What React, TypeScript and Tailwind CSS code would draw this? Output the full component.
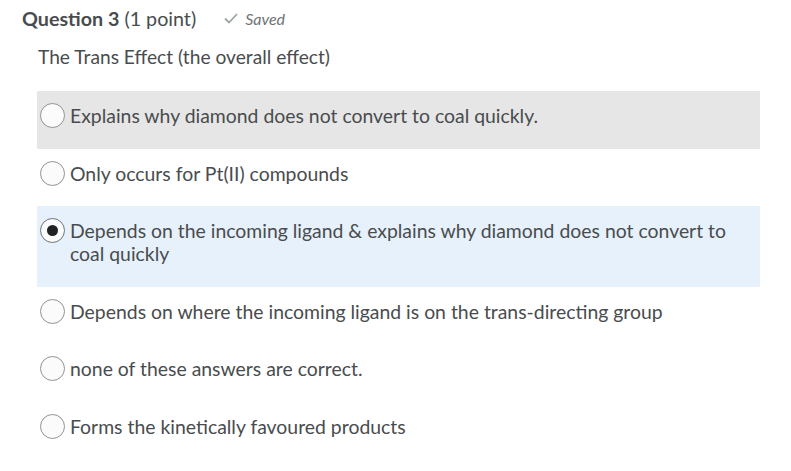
import React from 'react';

const OPTIONS = [
  { text: 'Explains why diamond does not convert to coal quickly.', bg: 'bg-[#e6e6e6]' },
  { text: 'Only occurs for Pt(II) compounds', bg: '' },
  { text: 'Depends on the incoming ligand & explains why diamond does not convert to coal quickly', bg: 'bg-[#e7f1fb]', checked: true },
  { text: 'Depends on where the incoming ligand is on the trans-directing group', bg: '' },
  { text: 'none of these answers are correct.', bg: '' },
  { text: 'Forms the kinetically favoured products', bg: '' },
];

function Radio({ checked }: { checked?: boolean }) {
  return (
    <span className="h-[23px] w-[25px] shrink-0 flex items-center justify-center">
      <span
        className={`w-[25px] h-[25px] shrink-0 rounded-full border bg-[#fbfbfc] flex items-center justify-center ${
          checked ? 'border-[#6e7376]' : 'border-[#8f9396]'
        }`}
      >
        {checked && <span className="w-[11px] h-[11px] rounded-full bg-[#202122]" />}
      </span>
    </span>
  );
}

export default function App() {
  return (
    <div className="w-[791px] h-[471px] bg-white text-[#494c4e] font-['Lato','Open_Sans',sans-serif] overflow-hidden">
      {/* Header */}
      <div className="flex items-center pl-[22px] pt-[6px] h-[31px]">
        <span className="text-[19.7px] leading-[24px]">
          <span className="font-bold">Question 3</span> (1 point)
        </span>
        <span className="ml-[28px] flex items-center gap-[7px] text-[#6e7376]">
          <svg width="14" height="11" viewBox="0 0 14 11" fill="none">
            <path d="M1 5.5 L5 9.5 L13 1" stroke="#9ea3a6" strokeWidth="1.8" />
          </svg>
          <span className="italic text-[16px]">Saved</span>
        </span>
      </div>

      {/* Question */}
      <div className="pl-[38px] pt-[14px] text-[19.2px] leading-[23px]">The Trans Effect (the overall effect)</div>

      {/* Options */}
      <div className="ml-[37px] w-[723px] mt-[23px] flex flex-col">
        {OPTIONS.map((o) => (
          <div key={o.text} className={`flex items-start gap-[5px] pl-[3px] pr-[20px] pt-[13px] pb-[21.5px] ${o.bg}`}>
            <Radio checked={o.checked} />
            <span className="text-[19.4px] leading-[23px]">{o.text}</span>
          </div>
        ))}
      </div>
    </div>
  );
}
